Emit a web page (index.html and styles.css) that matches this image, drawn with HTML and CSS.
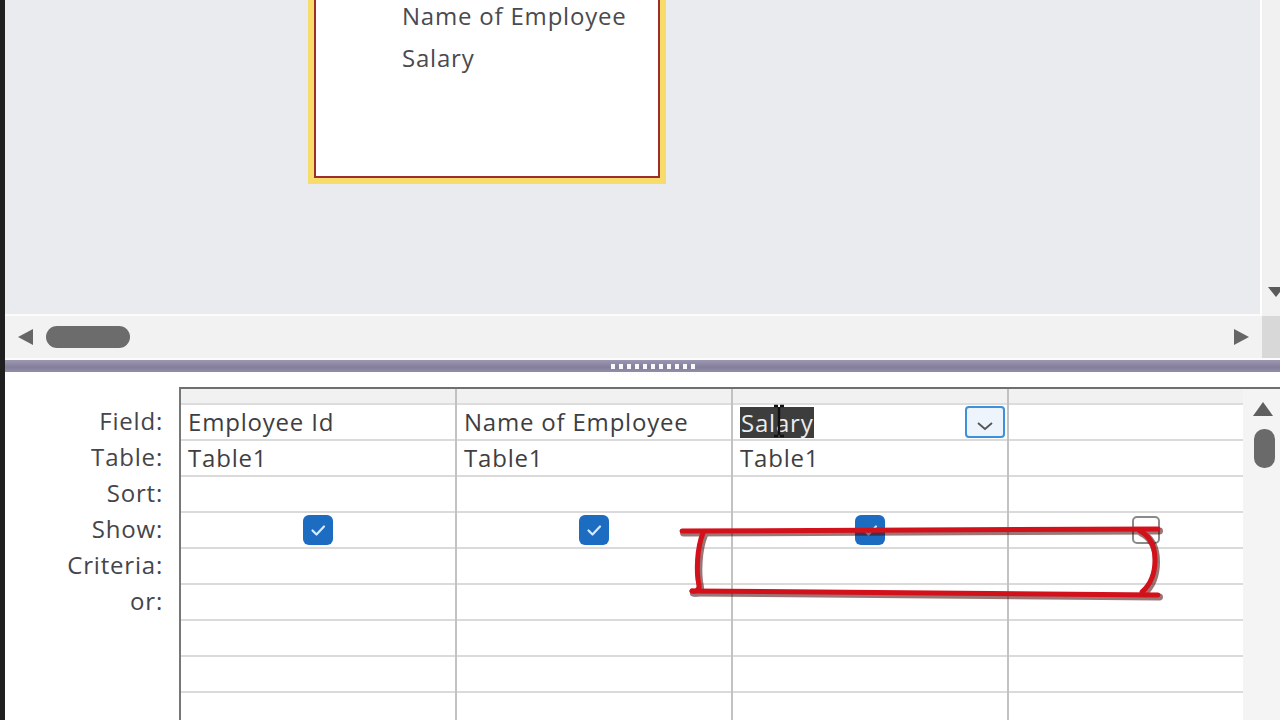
FILE: index.html
```html
<!DOCTYPE html>
<html>
<head>
<meta charset="utf-8">
<link rel="stylesheet" href="styles.css">
</head>
<body>
<div class="app">
  <div class="upper">
    <div class="canvas">
      <div class="tablebox">
        <ul class="fieldlist">
          <li>Name of Employee</li>
          <li>Salary</li>
        </ul>
      </div>
    </div>
    <div class="uvscroll"><span class="arrow-down"></span></div>
  </div>
  <div class="hscrollrow">
    <div class="hscroll">
      <span class="arrow-left"></span>
      <span class="hthumb"></span>
      <span class="spacer"></span>
      <span class="arrow-right"></span>
    </div>
    <div class="corner"></div>
  </div>
  <div class="splitter"><span class="grip"></span></div>
  <div class="lower">
    <div class="labels">
      <div class="lab-head"></div>
      <div class="lab">Field:</div>
      <div class="lab">Table:</div>
      <div class="lab">Sort:</div>
      <div class="lab">Show:</div>
      <div class="lab">Criteria:</div>
      <div class="lab">or:</div>
    </div>
    <div class="gridwrap">
      <div class="grid">
        <div class="col">
          <div class="head"></div>
          <div class="cell">Employee Id</div>
          <div class="cell">Table1</div>
          <div class="cell"></div>
          <div class="cell center"><span class="cb on"><svg viewBox="0 0 30 30" width="30" height="30"><path d="M9.5 15.5 L13.5 19.5 L21 11.5" fill="none" stroke="#dbe9fb" stroke-width="2.2" stroke-linecap="round" stroke-linejoin="round"/></svg></span></div>
          <div class="cell"></div><div class="cell"></div><div class="cell"></div><div class="cell"></div><div class="cell"></div>
        </div>
        <div class="col">
          <div class="head"></div>
          <div class="cell">Name of Employee</div>
          <div class="cell">Table1</div>
          <div class="cell"></div>
          <div class="cell center"><span class="cb on"><svg viewBox="0 0 30 30" width="30" height="30"><path d="M9.5 15.5 L13.5 19.5 L21 11.5" fill="none" stroke="#dbe9fb" stroke-width="2.2" stroke-linecap="round" stroke-linejoin="round"/></svg></span></div>
          <div class="cell"></div><div class="cell"></div><div class="cell"></div><div class="cell"></div><div class="cell"></div>
        </div>
        <div class="col">
          <div class="head"></div>
          <div class="cell field-sel">
            <span class="sel">Salary<svg class="ibeam" viewBox="0 0 14 34" width="14" height="34"><path d="M2 2 H6 M8 2 H12 M7 3 V31 M2 32 H6 M8 32 H12" stroke="#111" stroke-width="2.4" fill="none"/></svg></span>
            <span class="dd"><svg viewBox="0 0 20 12" width="20" height="12"><path d="M3 3 L10 9 L17 3" fill="none" stroke="#555" stroke-width="1.8"/></svg></span>
          </div>
          <div class="cell">Table1</div>
          <div class="cell"></div>
          <div class="cell center"><span class="cb on"><svg viewBox="0 0 30 30" width="30" height="30"><path d="M9.5 15.5 L13.5 19.5 L21 11.5" fill="none" stroke="#dbe9fb" stroke-width="2.2" stroke-linecap="round" stroke-linejoin="round"/></svg></span></div>
          <div class="cell"></div><div class="cell"></div><div class="cell"></div><div class="cell"></div><div class="cell"></div>
        </div>
        <div class="col">
          <div class="head"></div>
          <div class="cell"></div>
          <div class="cell"></div>
          <div class="cell"></div>
          <div class="cell center"><span class="cb off"></span></div>
          <div class="cell"></div><div class="cell"></div><div class="cell"></div><div class="cell"></div><div class="cell"></div>
        </div>
      </div>
    </div>
    <div class="lvscroll">
      <span class="arrow-up"></span>
      <span class="vthumb"></span>
    </div>
  </div>
  <svg class="annot" viewBox="0 0 1280 720" width="1280" height="720">
    <g fill="none" stroke-linecap="round" stroke-linejoin="round">
      <g stroke="#4a0808" stroke-width="7" opacity="0.55" transform="translate(1.5,2)">
        <path d="M682 531 L1158 529"/>
        <path d="M703 533 C697 548 696 572 699 585 C700 590 695 592 692 591"/>
        <path d="M692 591 L1158 595"/>
        <path d="M1140 531 C1150 536 1155 546 1155 560 C1155 575 1150 585 1142 592"/>
      </g>
      <g stroke="#d3111b" stroke-width="5">
        <path d="M682 531 L1158 529"/>
        <path d="M703 533 C697 548 696 572 699 585 C700 590 695 592 692 591"/>
        <path d="M692 591 L1158 595"/>
        <path d="M1140 531 C1150 536 1155 546 1155 560 C1155 575 1150 585 1142 592"/>
      </g>
    </g>
  </svg>
</div>
</body>
</html>
```
FILE: styles.css
```css
html, body {
  margin: 0;
  padding: 0;
  width: 1280px;
  height: 720px;
  overflow: hidden;
  background: #ffffff;
}
body {
  font-family: "Open Sans", "Noto Sans", "DejaVu Sans", sans-serif;
  color: #3c3c3c;
}
.app {
  position: relative;
  width: 1280px;
  height: 720px;
  display: flex;
  flex-direction: column;
  box-sizing: border-box;
  border-left: 5px solid #1f1f1f;
  overflow: hidden;
}

/* upper pane */
.upper {
  height: 316px;
  display: flex;
  flex: none;
}
.canvas {
  flex: 1;
  position: relative;
  background: #e9ebee;
  overflow: hidden;
  border-bottom: 2px solid #fbfbfb;
}
.tablebox {
  position: absolute;
  left: 303px;
  top: -60px;
  width: 358px;
  height: 244px;
  box-sizing: border-box;
  border: 6px solid #f7dc6b;
  background: #f7dc6b;
}
.fieldlist {
  list-style: none;
  margin: 0;
  padding: 47px 0 0 86px;
  height: 100%;
  box-sizing: border-box;
  background: #ffffff;
  border: 2px solid #9b2d2b;
}
.fieldlist li {
  height: 42px;
  line-height: 42px;
  font-size: 24px;
  letter-spacing: 0.8px;
  color: #4a4a50;
}
.uvscroll {
  width: 18px;
  background: #f1f1f1;
  border-left: 2px solid #ffffff;
  position: relative;
}
.arrow-down {
  position: absolute;
  right: -4px;
  top: 287px;
  width: 0;
  height: 0;
  border-left: 8px solid transparent;
  border-right: 8px solid transparent;
  border-top: 10px solid #5a5a5a;
}

/* horizontal scroll row */
.hscrollrow {
  height: 42px;
  display: flex;
  flex: none;
  border-bottom: 2px solid #fbfbfb;
}
.hscroll {
  flex: 1;
  background: #f2f2f3;
  display: flex;
  align-items: center;
  padding: 0 13px 0 13px;
}
.arrow-left {
  width: 0;
  height: 0;
  border-top: 8px solid transparent;
  border-bottom: 8px solid transparent;
  border-right: 15px solid #666666;
}
.hthumb {
  width: 84px;
  height: 22px;
  border-radius: 11px;
  background: #6c6c6c;
  margin-left: 13px;
}
.spacer { flex: 1; }
.arrow-right {
  width: 0;
  height: 0;
  border-top: 8px solid transparent;
  border-bottom: 8px solid transparent;
  border-left: 15px solid #666666;
}
.corner {
  width: 18px;
  background: #d8d8d8;
}

/* splitter */
.splitter {
  height: 12px;
  flex: none;
  background: linear-gradient(#9c97b1, #847e9b 60%, #938ea8);
  display: flex;
  justify-content: center;
  align-items: center;
}
.grip {
  width: 84px;
  height: 5px;
  margin-left: 20px;
  background: repeating-linear-gradient(90deg, #ffffff 0 4px, transparent 4px 8px);
  opacity: 0.95;
}

/* lower pane */
.lower {
  flex: 1;
  display: flex;
  background: #ffffff;
  padding-top: 15px;
  min-height: 0;
}
.labels {
  width: 174px;
  flex: none;
  padding-right: 16px;
  box-sizing: border-box;
  text-align: right;
  padding-top: 1px;
}
.lab-head { height: 16px; }
.lab {
  height: 36px;
  line-height: 34px;
  font-size: 24px;
  letter-spacing: 0.8px;
  color: #45454a;
}
.gridwrap {
  width: 1064px;
  flex: none;
  overflow: hidden;
  border-top: 2px solid #6f6f6f;
  border-left: 2px solid #777777;
  box-sizing: border-box;
}
.grid {
  display: flex;
  width: 1104px;
}
.col {
  width: 276px;
  flex: none;
  box-sizing: border-box;
  border-right: 2px solid #c2c2c2;
}
.head {
  height: 14px;
  background: #f1f1f1;
  border-bottom: 2px solid #dcdcdc;
}
.cell {
  height: 34px;
  border-bottom: 2px solid #dadada;
  padding-left: 7px;
  line-height: 34px;
  font-size: 24px;
  letter-spacing: 0.8px;
  color: #3e3e42;
  white-space: nowrap;
  display: flex;
  align-items: center;
}
.cell.center {
  justify-content: center;
  padding-left: 0;
}
.cb {
  width: 30px;
  height: 30px;
  border-radius: 6px;
  box-sizing: border-box;
  display: block;
}
.cb svg { display: block; }
.cb.on { background: #1c6cc2; }
.cb.off {
  width: 28px;
  height: 28px;
  border: 2px solid #8a8a8a;
  background: #ffffff;
  border-radius: 5px;
}
.field-sel {
  justify-content: space-between;
  padding-right: 2px;
}
.sel {
  position: relative;
  background: #3d3d3d;
  color: #ececec;
  height: 31px;
  line-height: 31px;
  padding: 0 0 0 1px;
  margin-left: 0;
}
.ibeam {
  position: absolute;
  left: 32px;
  top: -3px;
}
.dd {
  width: 40px;
  height: 32px;
  box-sizing: border-box;
  border: 2px solid #3e90da;
  border-radius: 4px;
  background: #eef4fb;
  display: flex;
  justify-content: center;
  align-items: flex-end;
  padding-bottom: 4px;
}
.dd svg { display: block; }
.lvscroll {
  flex: 1;
  background: #f4f4f4;
  border-top: 2px solid #6f6f6f;
  position: relative;
}
.arrow-up {
  position: absolute;
  left: 10px;
  top: 13px;
  width: 0;
  height: 0;
  border-left: 10px solid transparent;
  border-right: 10px solid transparent;
  border-bottom: 14px solid #5f5f5f;
}
.vthumb {
  position: absolute;
  left: 11px;
  top: 40px;
  width: 21px;
  height: 39px;
  border-radius: 10px;
  background: #6a6a6a;
}

/* hand-drawn annotation overlay */
.annot {
  position: absolute;
  left: -5px;
  top: 0;
  pointer-events: none;
}
```
